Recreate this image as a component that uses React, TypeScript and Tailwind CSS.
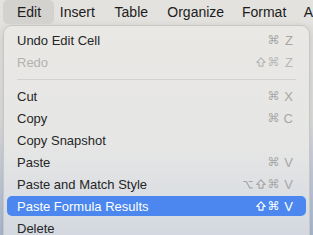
import React from "react";

type Item = { label: string; mods?: string[]; key?: string; disabled?: boolean; active?: boolean };

const Mod = ({ m }: { m: string }) => {
  if (m === "⇧")
    return (
      <span className="w-[13px] flex items-center justify-center">
        <svg width="10" height="10" viewBox="0 0 10 10" fill="none" stroke="currentColor" strokeWidth="1.2" strokeLinejoin="round">
          <path d="M5 0.9 L9.2 5.4 H7 V9.1 H3 V5.4 H0.8 Z" />
        </svg>
      </span>
    );
  if (m === "⌥")
    return (
      <span className="w-[13px] flex items-center justify-center">
        <svg width="10" height="9" viewBox="0 0 10 9" fill="none" stroke="currentColor" strokeWidth="1.2" strokeLinecap="round">
          <path d="M0.7 1.5 H3.3 L6.7 7.8 H9.3 M6.3 1.5 H9.3" />
        </svg>
      </span>
    );
  return (
    <span className="w-[13px] text-center text-[12px] leading-none" style={{ fontFamily: '"DejaVu Sans", sans-serif' }}>
      {m}
    </span>
  );
};

const Shortcut = ({ mods = [], k, color }: { mods?: string[]; k?: string; color: string }) => (
  <div className={`flex items-center ${color}`}>
    {mods.map((m, i) => (
      <Mod key={i} m={m} />
    ))}
    <span className="w-[13px] text-right text-[13px] leading-none">{k}</span>
  </div>
);

const Row = ({ item }: { item: Item }) => (
  <div className="h-[22px] py-[1px]">
    <div
      className={`h-[20px] flex items-center justify-between pl-[10px] pr-[13px] rounded-[5px] ${
        item.active ? "bg-[#4b87ee] text-white" : item.disabled ? "text-[#b3b2b0]" : "text-[#262626]"
      }`}
    >
      <span className="text-[13px] leading-none">{item.label}</span>
      {item.key && (
        <Shortcut
          mods={item.mods}
          k={item.key}
          color={item.active ? "text-white" : item.disabled ? "text-[#b8b7b5]" : "text-[#a7a6a4]"}
        />
      )}
    </div>
  </div>
);

export default function App() {
  const top: Item[] = [
    { label: "Undo Edit Cell", mods: ["⌘"], key: "Z" },
    { label: "Redo", mods: ["⇧", "⌘"], key: "Z", disabled: true },
  ];
  const bottom: Item[] = [
    { label: "Cut", mods: ["⌘"], key: "X" },
    { label: "Copy", mods: ["⌘"], key: "C" },
    { label: "Copy Snapshot" },
    { label: "Paste", mods: ["⌘"], key: "V" },
    { label: "Paste and Match Style", mods: ["⌥", "⇧", "⌘"], key: "V" },
    { label: "Paste Formula Results", mods: ["⇧", "⌘"], key: "V", active: true },
    { label: "Delete" },
  ];
  return (
    <div
      className="w-[313px] h-[235px] overflow-hidden bg-gradient-to-b from-[#e3e2df] via-[#dcdcdc] to-[#a9b8d2]"
      style={{ fontFamily: '"Liberation Sans", Arial, sans-serif' }}
    >
      <div className="h-[24px] flex items-stretch pl-[3px] bg-[#e3e2df] text-[14px] text-[#1c1c1c]">
        <span className="w-[51px] pl-[14px] flex items-center rounded-[5px] bg-[#d3d2cf]">Edit</span>
        <span className="w-[55px] pl-[6px] flex items-center">Insert</span>
        <span className="w-[53px] pl-[6px] flex items-center">Table</span>
        <span className="w-[75px] pl-[6px] flex items-center">Organize</span>
        <span className="w-[62px] pl-[6px] flex items-center">Format</span>
        <span className="pl-[6px] flex items-center">A</span>
      </div>
      <div className="ml-[3px] mt-[1px] w-[307px] h-[240px] rounded-[9px] border border-[#c8c7c4] bg-gradient-to-b from-[#e9e8e5] via-[#e6e6e5] to-[#cdd4df] px-[3px] pt-[3px] shadow-[0_2px_8px_rgba(0,0,0,0.12)]">
        {top.map((it) => (
          <Row key={it.label} item={it} />
        ))}
        <div className="h-[12px] flex items-center px-[10px]">
          <div className="h-px w-full bg-[#d2d1ce]" />
        </div>
        {bottom.map((it) => (
          <Row key={it.label} item={it} />
        ))}
      </div>
    </div>
  );
}
